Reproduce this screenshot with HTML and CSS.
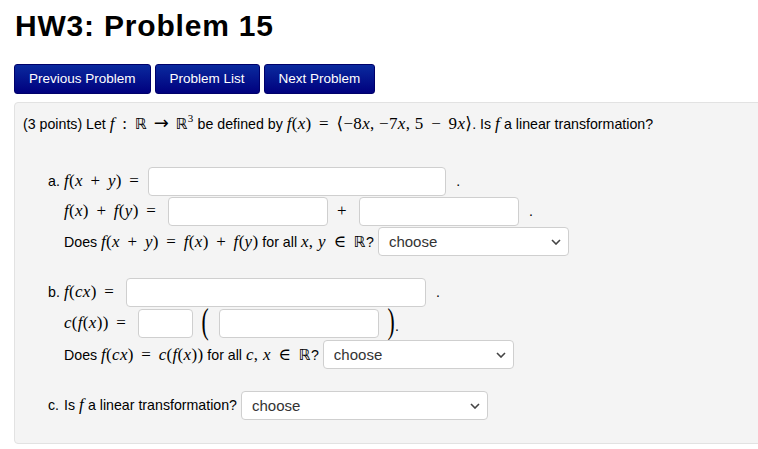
FILE: index.html
```html
<!DOCTYPE html>
<html lang="en">
<head>
    <meta charset="UTF-8">
    <meta name="viewport" content="width=device-width, initial-scale=1.0">
    <title>HW3: Problem 15</title>
    <link rel="stylesheet" href="styles.css">
</head>
<body>
<div class="page">
    <h1 class="title">HW3: Problem 15</h1>

    <div class="nav">
        <a class="nav-btn" href="#">Previous Problem</a>
        <a class="nav-btn" href="#">Problem List</a>
        <a class="nav-btn" href="#">Next Problem</a>
    </div>

    <div class="problem">
        <p class="intro">(3 points) Let <span class="m"><i>f</i> <span class="op">:</span> <span class="bb">ℝ</span> <span class="op arr">→</span> <span class="bb">ℝ</span><sup>3</sup></span> be defined by <span class="m"><i>f</i>(<i>x</i>) <span class="op">=</span> ⟨−8<i>x</i>, −7<i>x</i>, 5 <span class="op">−</span> 9<i>x</i>⟩</span>. Is <span class="m"><i>f</i></span> a linear transformation?</p>

        <!-- part a -->
        <div class="part">
            <span class="label">a.</span>
            <div class="rows">
                <div class="row">
                    <span class="m"><i>f</i>(<i>x</i> <span class="op">+</span> <i>y</i>) <span class="op">=</span></span>
                    <input class="ans w-wide" type="text">
                    <span class="dot">.</span>
                </div>
                <div class="row">
                    <span class="m"><i>f</i>(<i>x</i>) <span class="op">+</span> <i>f</i>(<i>y</i>) <span class="op">=</span></span>
                    <input class="ans w-mid push" type="text">
                    <span class="m plus">+</span>
                    <input class="ans w-mid" type="text">
                    <span class="dot">.</span>
                </div>
                <div class="row">
                    <span>Does <span class="m"><i>f</i>(<i>x</i> <span class="op">+</span> <i>y</i>) <span class="op">=</span> <i>f</i>(<i>x</i>) <span class="op">+</span> <i>f</i>(<i>y</i>)</span> for all <span class="m"><i>x</i>, <i>y</i> <span class="op">∈</span> <span class="bb">ℝ</span></span>?</span>
                    <span class="pick">
                        <select class="choose"><option>choose</option><option>yes</option><option>no</option></select>
                        <svg class="chev" width="10" height="6" viewBox="0 0 10 6"><path d="M1 1l4 4 4-4" fill="none" stroke="#444" stroke-width="1.6"/></svg>
                    </span>
                </div>
            </div>
        </div>

        <!-- part b -->
        <div class="part part-b">
            <span class="label">b.</span>
            <div class="rows">
                <div class="row">
                    <span class="m"><i>f</i>(<i>cx</i>) <span class="op">=</span></span>
                    <input class="ans w-wide2 push" type="text">
                    <span class="dot">.</span>
                </div>
                <div class="row">
                    <span class="m"><i>c</i>(<i>f</i>(<i>x</i>)) <span class="op">=</span></span>
                    <input class="ans w-small push" type="text">
                    <span class="paren">(</span>
                    <input class="ans w-mid" type="text">
                    <span class="paren">)</span><span class="dot-tight">.</span>
                </div>
                <div class="row">
                    <span>Does <span class="m"><i>f</i>(<i>cx</i>) <span class="op">=</span> <i>c</i>(<i>f</i>(<i>x</i>))</span> for all <span class="m"><i>c</i>, <i>x</i> <span class="op">∈</span> <span class="bb">ℝ</span></span>?</span>
                    <span class="pick">
                        <select class="choose"><option>choose</option><option>yes</option><option>no</option></select>
                        <svg class="chev" width="10" height="6" viewBox="0 0 10 6"><path d="M1 1l4 4 4-4" fill="none" stroke="#444" stroke-width="1.6"/></svg>
                    </span>
                </div>
            </div>
        </div>

        <!-- part c -->
        <div class="part">
            <span class="label">c.</span>
            <div class="rows">
                <div class="row">
                    <span>Is <span class="m"><i>f</i></span> a linear transformation?</span>
                    <span class="pick">
                        <select class="choose choose-wide"><option>choose</option><option>yes</option><option>no</option></select>
                        <svg class="chev" width="10" height="6" viewBox="0 0 10 6"><path d="M1 1l4 4 4-4" fill="none" stroke="#444" stroke-width="1.6"/></svg>
                    </span>
                </div>
            </div>
        </div>
    </div>
</div>
</body>
</html>
```

FILE: styles.css
```css
body {
    margin: 0;
    font-family: "Liberation Sans", Arial, sans-serif;
    font-size: 14.2px;
    color: #000;
    background: #fff;
    overflow-x: hidden;
}
.page {
    padding-left: 14px;
}
.title {
    margin: 8px 0 0 1px;
    font-size: 30px;
    line-height: 36px;
    font-weight: bold;
    letter-spacing: 0.8px;
}

.nav {
    display: flex;
    gap: 4px;
    margin-top: 20px;
}
.nav-btn {
    display: block;
    height: 28px;
    line-height: 28px;
    padding: 0 14px;
    border: 1px solid #00006a;
    border-radius: 3px;
    background: linear-gradient(#0a2a9e, #00007e);
    color: #fff;
    font-size: 13.5px;
    text-decoration: none;
}

.problem {
    margin-top: 8px;
    margin-right: -12px;
    padding: 10px 8px 23px;
    background: #f4f4f4;
    border: 1px solid #e2e2e2;
    border-radius: 4px;
}
.intro {
    margin: 0 0 32px;
    line-height: 20px;
}

.m {
    font-family: "Liberation Serif", "DejaVu Serif", serif;
    font-size: 17px;
    letter-spacing: 0.3px;
}
.m i {
    font-style: italic;
}
.m sup {
    font-size: 11px;
    vertical-align: 7px;
    line-height: 0;
}
.bb {
    font-family: "DejaVu Sans", sans-serif;
    font-size: 15px;
}
.op {
    padding: 0 3px;
}
.arr {
    font-family: "DejaVu Sans", sans-serif;
    font-size: 18px;
    padding: 0 2px;
}

.part {
    display: grid;
    grid-template-columns: 16px 1fr;
    margin-left: 25px;
    margin-bottom: 21px;
}
.part:last-child {
    margin-bottom: 0;
}
.label {
    line-height: 30px;
}
.rows {
    display: flex;
    flex-direction: column;
}
.part-b .rows {
    gap: 1px;
}
.row {
    display: flex;
    align-items: center;
    gap: 4px;
    height: 30px;
    white-space: nowrap;
}

.ans {
    box-sizing: border-box;
    height: 29px;
    margin: 0 0 0 2px;
    padding: 0 6px;
    background: #fff;
    border: 1px solid #cfcfcf;
    border-radius: 4px;
    font-family: "Liberation Sans", Arial, sans-serif;
    font-size: 14px;
}
.ans.push {
    margin-left: 5px;
}
.w-wide { width: 298px; }
.w-wide2 { width: 300px; }
.w-mid { width: 160px; }
.w-small { width: 55px; }

.dot {
    margin-left: 6px;
}
.plus {
    margin: 0 6px 0 5px;
}
.paren {
    font-family: "Liberation Serif", serif;
    font-size: 36px;
    line-height: 30px;
    transform: scaleX(0.6);
    margin: -4px 2px 0;
}
.dot-tight {
    margin-left: -8px;
    margin-top: 6px;
}

.pick {
    position: relative;
    display: inline-flex;
}
.choose {
    box-sizing: border-box;
    appearance: none;
    -webkit-appearance: none;
    width: 191px;
    height: 29px;
    padding: 0 10px;
    background: #fff;
    border: 1px solid #cfcfcf;
    border-radius: 4px;
    color: #333;
    font-family: "Liberation Sans", Arial, sans-serif;
    font-size: 15px;
}
.choose-wide {
    width: 247px;
}
.chev {
    position: absolute;
    right: 8px;
    top: 12px;
    pointer-events: none;
}
```
